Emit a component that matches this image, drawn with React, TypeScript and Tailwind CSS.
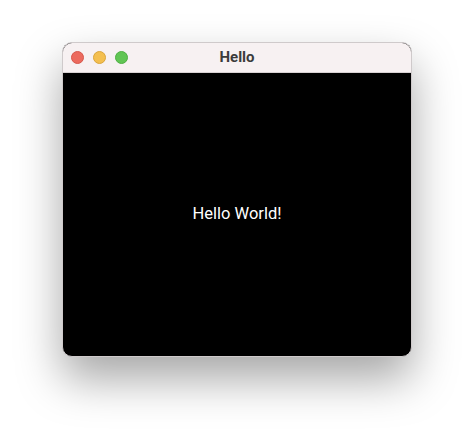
import React from 'react';

const TrafficLights: React.FC = () => (
  <div className="flex items-center gap-[9px] pl-[8px]">
    <span className="h-[13px] w-[13px] rounded-full bg-[#ec6a5e] border border-[#d6574c]" />
    <span className="h-[13px] w-[13px] rounded-full bg-[#f4bf4f] border border-[#d9a53c]" />
    <span className="h-[13px] w-[13px] rounded-full bg-[#61c554] border border-[#4fae43]" />
  </div>
);

export default function App() {
  return (
    <div
      className="flex h-[439px] w-full justify-center bg-white pt-[42px]"
      style={{ fontFamily: 'Roboto, "Noto Sans", "Liberation Sans", sans-serif' }}
    >
      <div className="flex h-[315px] w-[350px] flex-col overflow-hidden rounded-[10px] border border-[#cfcacb] bg-black shadow-[0_22px_45px_rgba(0,0,0,0.35)]">
        <div className="relative flex h-[30px] shrink-0 items-center bg-[#f7f1f2] border-b border-[#d8d2d3]">
          <TrafficLights />
          <span className="absolute inset-x-0 text-center text-[15px] font-bold text-[#3b3b3b]">
            Hello
          </span>
        </div>
        <div className="flex flex-1 items-center justify-center">
          <span className="text-[16.5px] text-white">Hello World!</span>
        </div>
      </div>
    </div>
  );
}
